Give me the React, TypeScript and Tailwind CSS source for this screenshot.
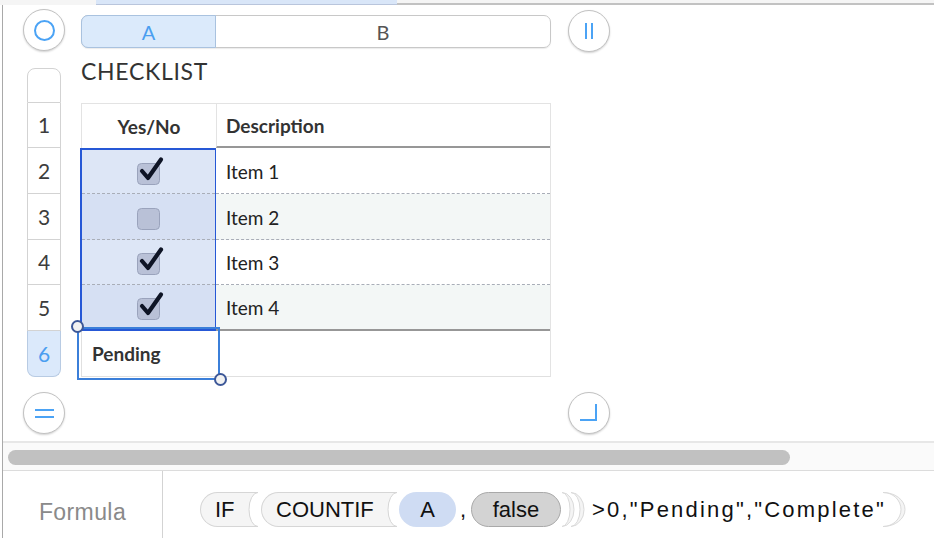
import React from "react";

const ui = { fontFamily: "Lato, 'Noto Sans', sans-serif" };
const helv = { fontFamily: "'Liberation Sans', Arial, sans-serif" };

const CircleBtn = ({ children }: { children: React.ReactNode }) => (
  <div className="w-[42px] h-[42px] rounded-full bg-white border border-[#c2c2c2] shadow-[0_1px_2px_rgba(0,0,0,0.18)] flex items-center justify-center">
    {children}
  </div>
);

const CheckBox = ({ checked }: { checked: boolean }) => (
  <svg width="30" height="30" viewBox="0 0 30 30" className="overflow-visible">
    <rect x="3.5" y="6.5" width="22" height="21" rx="4" fill="#b9c1d7" stroke="#9aa3bc" />
    {checked && (
      <path d="M8 14 L14 21 L27 2.5" fill="none" stroke="#0e1425" strokeWidth="4.2" strokeLinecap="round" strokeLinejoin="round" />
    )}
  </svg>
);

// concave "(" end of a function token
const OpenCap = () => (
  <svg width="13" height="35" viewBox="0 0 13 35">
    <path d="M0 0.5 H12 A 9 17 0 0 0 12 34.5 H0 Z" fill="#f5f5f5" />
    <path d="M0 0.5 H12 A 9 17 0 0 0 12 34.5 H0" fill="none" stroke="#d6d6d6" />
  </svg>
);

// ")" crescent closing a function token
const CloseCap = ({ w = 14 }: { w?: number }) => (
  <svg width={w} height="35" viewBox={`0 0 ${w} 35`}>
    <path
      d={`M1 0.5 A ${w - 2} 17 0 0 1 1 34.5 A ${w - 6} 17 0 0 0 1 0.5 Z`}
      fill="#f4f4f4"
      stroke="#dadada"
    />
  </svg>
);

const items = [
  { checked: true, label: "Item 1" },
  { checked: false, label: "Item 2" },
  { checked: true, label: "Item 3" },
  { checked: true, label: "Item 4" },
];
// heights inside the blue selection (its 2px border takes the rest)
const aH = ["h-[44px]", "h-[46px]", "h-[45px]", "h-[44px]"];
const bH = ["h-[46px]", "h-[46px]", "h-[45px]", "h-[46px]"];
const numH = ["h-[45px]", "h-[46px]", "h-[46px]", "h-[45px]", "h-[46px]"];

export default function App() {
  return (
    <div className="w-[934px] h-[538px] overflow-hidden bg-white flex flex-col" style={ui}>
      {/* top strip */}
      <div className="h-[5px] flex shrink-0">
        <div className="w-[96px] bg-[#f5f5f5]" />
        <div className="w-[301px] bg-[#d9e6f8] border-b border-[#b9c5dc]" />
        <div className="flex-1 bg-[#f5f5f5] border-b-2 border-[#c2c2c2]" />
      </div>

      <div className="flex-1 ml-[2px] border-l border-[#a9a9a9] flex flex-col">
        {/* sheet area */}
        <div className="h-[438px] flex pl-[20px] border-b-2 border-[#e7e7e7] shrink-0">
          {/* left column */}
          <div className="w-[42px] flex flex-col items-center">
            <div className="mt-[4px]">
              <CircleBtn>
                <div className="w-[21px] h-[21px] rounded-full border-2 border-[#4ba3f5]" />
              </CircleBtn>
            </div>
            <div className="mt-[17px] w-[34px] flex flex-col text-[21px] text-[#3c3c3c]">
              <div className="h-[35px] border border-[#d3d3d3] rounded-t-[8px]" />
              {["1", "2", "3", "4", "5"].map((n, i) => (
                <div
                  key={n}
                  className={`${numH[i]} border-x border-b border-[#d3d3d3] flex items-center justify-center`}
                >
                  {n}
                </div>
              ))}
              <div className="h-[46px] border-x border-b border-[#b8cbe3] bg-[#dbe9fb] rounded-b-[8px] flex items-center justify-center text-[#4a9ef0]">
                6
              </div>
            </div>
            <div className="mt-[15px]">
              <CircleBtn>
                <div className="flex flex-col gap-[5px]">
                  <div className="w-[19px] h-[2px] bg-[#4ba3f5]" />
                  <div className="w-[19px] h-[2px] bg-[#4ba3f5]" />
                </div>
              </CircleBtn>
            </div>
          </div>

          {/* middle column */}
          <div className="ml-[16px] w-[470px] flex flex-col">
            <div className="mt-[10px] h-[33px] flex rounded-[7px] border border-[#c8c8c8] shadow-[0_1px_1px_rgba(0,0,0,0.08)] text-[20px]">
              <div className="w-[135px] -m-px mr-0 rounded-l-[7px] border border-[#a9c2df] bg-[#dbeafb] text-[#4a9ef0] flex items-center justify-center">
                A
              </div>
              <div className="flex-1 flex items-center justify-center text-[#555]">B</div>
            </div>
            <div className="mt-[5px] h-[37px] flex items-center text-[23px] text-[#333] tracking-[0.7px]">CHECKLIST</div>
            <div className="mt-[13px] flex text-[19px] text-[#222]">
              {/* column A */}
              <div className="w-[135px] flex flex-col">
                <div className="h-[45px] border-l border-t border-[#e3e3e3] flex items-center justify-center pt-[2px] font-bold text-[#333]">
                  Yes/No
                </div>
                <div className="border-2 border-[#2658d6] -mx-px">
                  {items.map((it, i) => (
                    <div
                      key={it.label}
                      className={`${aH[i]} ${i % 2 === 0 ? "bg-[#dde6f6]" : "bg-[#d6e0f3]"} ${i < 3 ? "border-b border-dashed border-[#a9aeb8]" : ""} flex items-center justify-center`}
                    >
                      <CheckBox checked={it.checked} />
                    </div>
                  ))}
                </div>
                <div className="relative h-[46px] border-l border-b border-[#e0e0e0] flex items-center pl-[10px] pt-[2px] font-bold text-[#333]">
                  Pending
                  <div className="absolute -left-[5px] -top-[4px] -right-[4px] -bottom-[4px] border-2 border-[#3b7fd9]" />
                  <div className="absolute left-[-11px] top-[-11px] w-[13px] h-[13px] rounded-full bg-[#f2f2f2] border-2 border-[#3d5898]" />
                  <div className="absolute left-[132px] top-[42px] w-[13px] h-[13px] rounded-full bg-[#f2f2f2] border-2 border-[#3d5898]" />
                </div>
              </div>
              {/* column B */}
              <div className="flex-1 flex flex-col border-r border-[#e3e3e3]">
                <div className="h-[45px] border-l border-t border-[#e3e3e3] border-b-2 border-b-[#979797] flex items-center pl-[9px] pt-[2px] font-bold text-[#333]">
                  Description
                </div>
                {items.map((it, i) => (
                  <div
                    key={it.label}
                    className={`${bH[i]} ${i % 2 === 0 ? "bg-white" : "bg-[#f3f7f6]"} ${i < 3 ? "border-b border-dashed border-[#a9aeb8]" : "border-b-2 border-[#979797]"} flex items-center pl-[10px] pt-[3px]`}
                  >
                    {it.label}
                  </div>
                ))}
                <div className="h-[46px] border-b border-[#e0e0e0]" />
              </div>
            </div>
          </div>

          {/* right column */}
          <div className="ml-[17px] w-[42px] flex flex-col">
            <div className="mt-[5px]">
              <CircleBtn>
                <div className="flex gap-[4px]">
                  <div className="w-[2px] h-[16px] bg-[#4ba3f5]" />
                  <div className="w-[2px] h-[16px] bg-[#4ba3f5]" />
                </div>
              </CircleBtn>
            </div>
            <div className="mt-[340px]">
              <CircleBtn>
                <div className="w-[17px] h-[17px] border-r-2 border-b-2 border-[#4ba3f5] ml-[-2px] mt-[-1px]" />
              </CircleBtn>
            </div>
          </div>
        </div>

        {/* horizontal scroll */}
        <div className="h-[28px] bg-[#fafafa] border-b border-[#dcdcdc] shrink-0 pt-[7px]">
          <div className="ml-[5px] w-[782px] h-[15px] rounded-full bg-[#c1c1c1]" />
        </div>

        {/* formula bar */}
        <div className="flex-1 flex" style={helv}>
          <div className="w-[160px] border-r border-[#d3d3d3] flex items-center justify-center pt-[15px] text-[23px] text-[#8a8a8a] tracking-[0.4px]">
            Formula
          </div>
          <div className="flex-1 flex items-center pl-[37px] pt-[9px] text-[22px] text-[#111]">
            <div className="flex items-center">
              <div className="w-[46px] h-[35px] flex items-center rounded-l-full border-l border-y border-[#d6d6d6] bg-[#f5f5f5] pl-[14px]">IF</div>
              <OpenCap />
            </div>
            <div className="flex items-center ml-[2px]">
              <div className="w-[124px] h-[35px] flex items-center rounded-l-full border-l border-y border-[#d6d6d6] bg-[#f5f5f5] pl-[14px]">COUNTIF</div>
              <OpenCap />
            </div>
            <div className="ml-[1px] h-[35px] w-[57px] rounded-full bg-[#cfdcf3] flex items-center justify-center">A</div>
            <span className="ml-[4px] w-[11px]">,</span>
            <div className="h-[35px] w-[90px] rounded-full bg-[#d3d3d3] border border-[#a9a9a9] flex items-center justify-center">false</div>
            <div className="flex">
              <CloseCap />
              <div className="-ml-[5px]"><CloseCap w={15} /></div>
            </div>
            <span className="ml-[7px] tracking-[2.2px]">&gt;0,"Pending","Complete"</span>
            <div className="-ml-[4px]"><CloseCap w={24} /></div>
          </div>
        </div>
      </div>
    </div>
  );
}
